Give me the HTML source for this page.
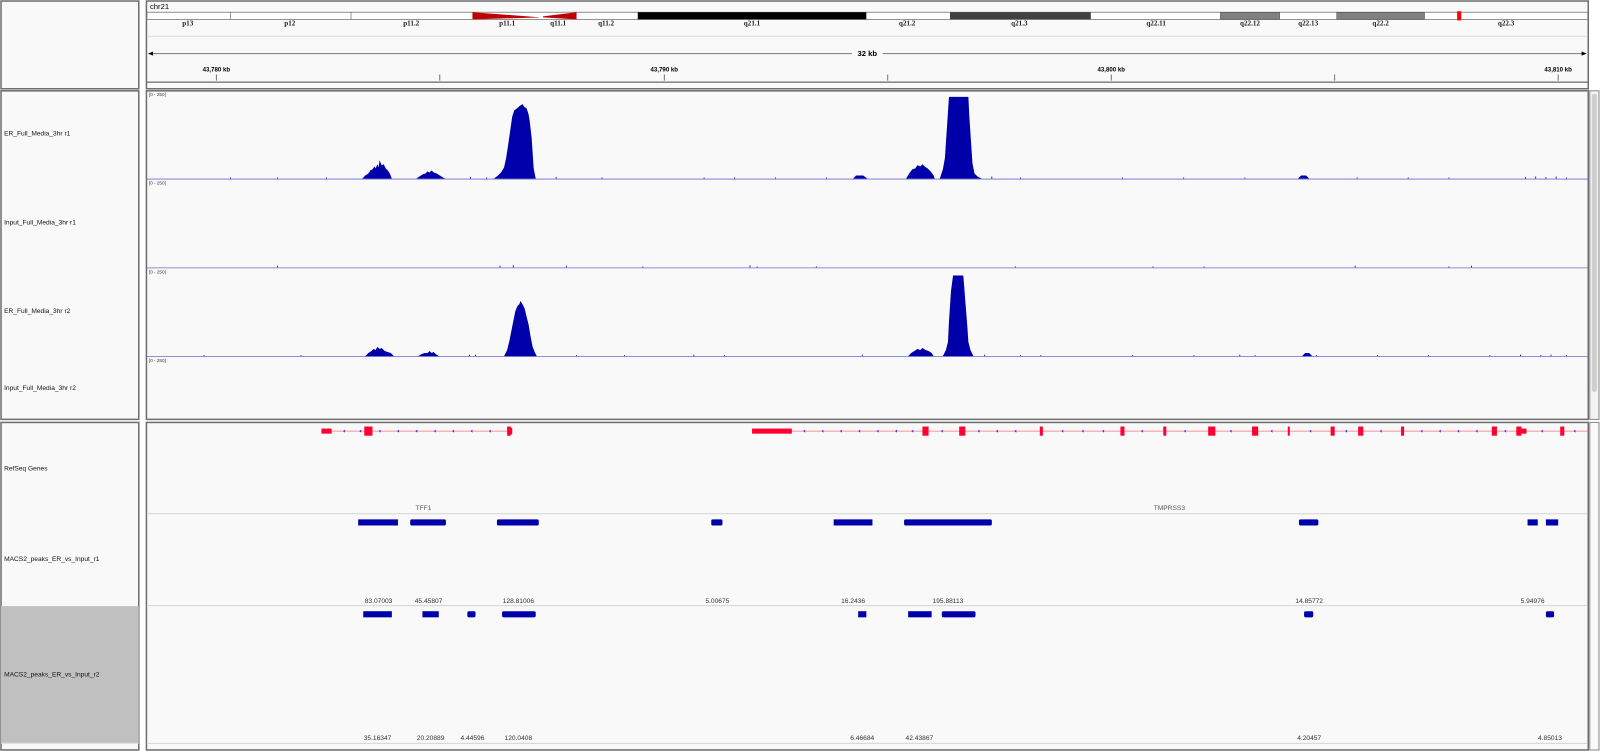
<!DOCTYPE html>
<html><head><meta charset="utf-8"><style>
html,body{margin:0;padding:0;background:#fff;width:1600px;height:751px;overflow:hidden}
svg{display:block}
text{font-family:"Liberation Sans",sans-serif}
.band text{font-family:"Liberation Serif",serif}
</style></head><body>
<svg width="1600" height="751" viewBox="0 0 1568 736" preserveAspectRatio="none" xmlns="http://www.w3.org/2000/svg">
<rect width="1568" height="736" fill="#fff"/>
<g fill="#f9f9f9" stroke="#6e6e6e" stroke-width="1.5">
<rect x="1" y="1" width="135" height="86"/>
<rect x="1" y="89" width="135" height="322"/>
<rect x="1" y="414" width="135" height="321"/>
<rect x="143.5" y="1" width="1413" height="86"/>
<rect x="143.5" y="89" width="1413" height="322"/>
<rect x="143.5" y="414" width="1413" height="321"/>
</g>
<rect x="1" y="594" width="135" height="134" fill="#c0c0c0"/>
<line x1="1" y1="728.5" x2="136" y2="728.5" stroke="#ddd"/>
<rect x="1558" y="89" width="9" height="322" fill="#f4f4f4" stroke="#888" stroke-width="1"/>
<rect x="1560" y="92" width="5" height="292" rx="2" fill="#cfcfcf"/>
<rect x="1558" y="414" width="9" height="321" fill="#fafafa" stroke="#888" stroke-width="1"/>
<text x="147" y="9" font-size="7.5">chr21</text>
<rect x="144" y="12" width="1412" height="7" fill="#fff" stroke="#777" stroke-width="0.8"/>
<g stroke="#555" stroke-width="0.6">
<line x1="226" y1="12" x2="226" y2="19"/><line x1="344" y1="12" x2="344" y2="19"/>
</g>
<polygon points="463,12 530,17 463,19" fill="#c00000"/>
<polygon points="532,16 565,12 565,19 532,17" fill="#c00000"/>
<rect x="625" y="12" width="224" height="7" fill="#000"/>
<rect x="931" y="12" width="138" height="7" fill="#404040"/>
<rect x="1196" y="12" width="58" height="7" fill="#808080" stroke="#444" stroke-width="0.5"/>
<rect x="1310" y="12" width="86" height="7" fill="#808080" stroke="#444" stroke-width="0.5"/>
<rect x="1428" y="11" width="4" height="9" fill="#ff0000"/>
<g class="band" font-size="7" text-anchor="middle" font-weight="bold" fill="#222">
<text x="184" y="25">p13</text>
<text x="284" y="25">p12</text>
<text x="403" y="25">p11.2</text>
<text x="497" y="25">p11.1</text>
<text x="547" y="25">q11.1</text>
<text x="594" y="25">q11.2</text>
<text x="737" y="25">q21.1</text>
<text x="889" y="25">q21.2</text>
<text x="999" y="25">q21.3</text>
<text x="1133" y="25">q22.11</text>
<text x="1225" y="25">q22.12</text>
<text x="1282" y="25">q22.13</text>
<text x="1353" y="25">q22.2</text>
<text x="1476" y="25">q22.3</text>
</g>
<line x1="144" y1="35.5" x2="1556" y2="35.5" stroke="#ddd"/>
<line x1="146" y1="52.5" x2="1553" y2="52.5" stroke="#888" stroke-width="1"/>
<polygon points="145,52.5 150,50.5 150,54.5" fill="#000"/>
<polygon points="1555,52.5 1550,50.5 1550,54.5" fill="#000"/>
<rect x="835" y="47" width="30" height="10" fill="#f9f9f9"/>
<text x="850" y="55" font-size="7.5" font-weight="bold" text-anchor="middle">32 kb</text>
<g font-size="6" font-weight="bold" text-anchor="middle">
<text x="212" y="70">43,780 kb</text><text x="651" y="70">43,790 kb</text>
<text x="1089" y="70">43,800 kb</text><text x="1527" y="70">43,810 kb</text>
</g>
<g stroke="#555" stroke-width="0.8">
<line x1="212" y1="73" x2="212" y2="79"/><line x1="431" y1="73" x2="431" y2="79"/>
<line x1="651" y1="73" x2="651" y2="79"/><line x1="870" y1="73" x2="870" y2="79"/>
<line x1="1089" y1="73" x2="1089" y2="79"/><line x1="1308" y1="73" x2="1308" y2="79"/>
<line x1="1527" y1="73" x2="1527" y2="79"/>
</g>
<line x1="144" y1="80.5" x2="1556" y2="80.5" stroke="#444" stroke-width="1"/>
<g font-size="6.5" fill="#111">
<text x="4" y="133">ER_Full_Media_3hr r1</text>
<text x="4" y="220">Input_Full_Media_3hr r1</text>
<text x="4" y="307">ER_Full_Media_3hr r2</text>
<text x="4" y="382">Input_Full_Media_3hr r2</text>
<text x="4" y="461">RefSeq Genes</text>
<text x="4" y="550">MACS2_peaks_ER_vs_Input_r1</text>
<text x="4" y="663">MACS2_peaks_ER_vs_Input_r2</text>
</g>
<g font-size="4.5" fill="#333">
<text x="146" y="94">[0 - 250]</text><text x="146" y="181">[0 - 250]</text>
<text x="146" y="268">[0 - 250]</text><text x="146" y="355">[0 - 250]</text>
</g>
<g stroke="#6a6ad0" stroke-width="0.8">
<line x1="144" y1="175.5" x2="1556" y2="175.5"/>
<line x1="144" y1="262.5" x2="1556" y2="262.5"/>
<line x1="144" y1="349.5" x2="1556" y2="349.5"/>
</g>
<g fill="#0000aa">
<polygon points="355,175 358,172 361,170 363,167 365,166 367,163 368,165 370,161 371,164 372,157 374,162 376,161 378,165 380,167 382,170 384,175"/>
<polygon points="408,175 411,173 414,171 417,170 419,168 421,169 423,167 425,169 428,170 431,172 436,175"/>
<polygon points="484,175 488,172 491,169 494,164 496,155 498,142 500,128 502,114 504,108 507,106 509,104 512,102 514,105 516,106 518,112 519,118 521,135 522,150 523,165 525,175"/>
<polygon points="888,175 891,170 894,166 897,165 899,162 902,163 904,161 906,163 909,165 912,168 915,172 916,175"/>
<polygon points="921,175 924,166 926,155 928,125 930,95 949,95 950,115 952,145 953,160 955,170 958,173 962,175"/>
<polygon points="1272,175 1275,172 1280,172 1283,175"/>
<polygon points="836,175 839,172 846,172 850,175"/>
</g>
<g stroke="#0000aa" stroke-width="0.8">
<path d="M226 175v-1M272 175v-1M320 175v-1M461 175v-1.5M477 175v-1M545 175v-1.5M590 175v-1M690 175v-1M720 175v-1M760 175v-1M810 175v-1M972 175v-2M1000 175v-1M1100 175v-1M1160 175v-1M1220 175v-1M1330 175v-1M1380 175v-1M1420 175v-1M1495 175v-1.5M1505 175v-2M1515 175v-1.5M1525 175v-2M1535 175v-1"/>
<path d="M272 262v-1.5M490 262v-1.5M503 262v-2M555 262v-1.5M630 262v-1M735 262v-2M742 262v-1M800 262v-1M995 262v-1M1130 262v-1M1180 262v-1M1328 262v-1.5M1420 262v-1M1442 262v-1.5"/>
</g>
<g fill="#0000aa">
<polygon points="358,349 361,346 364,344 366,342 368,343 370,340 372,342 374,341 377,344 380,345 383,346 386,349"/>
<polygon points="410,349 413,347 416,346 419,346 421,344 423,346 425,345 427,347 430,349"/>
<polygon points="494,349 497,343 499,335 501,325 503,315 505,305 507,300 509,298 510,295 512,298 514,302 516,310 518,318 520,330 522,340 524,345 526,349"/>
<polygon points="890,349 893,346 896,344 899,342 902,343 904,341 907,343 910,344 913,346 915,349"/>
<polygon points="924,349 927,343 929,335 930,315 932,285 934,270 944,270 945,282 946,295 948,320 949,335 951,343 954,349"/>
<polygon points="1276,349 1279,346 1283,346 1286,349"/>
</g>
<g stroke="#0000aa" stroke-width="0.8">
<path d="M200 349v-1M295 349v-1M460 349v-1.5M466 349v-1.5M565 349v-1M612 349v-1M680 349v-1.5M710 349v-1M845 349v-1.5M965 349v-1.5M1000 349v-1M1020 349v-1M1110 349v-1M1170 349v-1M1215 349v-1.5M1230 349v-1M1290 349v-1M1350 349v-1M1400 349v-1M1460 349v-1M1490 349v-1.5M1510 349v-1M1520 349v-1.5M1535 349v-1"/>
</g>
<g stroke="#ff6f80" stroke-width="0.8">
<line x1="315" y1="422.5" x2="502" y2="422.5"/>
<line x1="737" y1="422.5" x2="1556" y2="422.5"/>
</g>
<g fill="#ff0033">
<rect x="315" y="420" width="10" height="5"/>
<rect x="357" y="418" width="8" height="9"/>
<polygon points="497,418 500,418 502,420 502,425 500,427 497,427"/>
<rect x="737" y="420" width="39" height="5"/>
<rect x="904" y="418" width="6" height="9"/><rect x="940" y="418" width="6" height="9"/>
<rect x="1019" y="418" width="3" height="9"/><rect x="1098" y="418" width="4" height="9"/>
<rect x="1140" y="418" width="3" height="9"/><rect x="1184" y="418" width="7" height="9"/>
<rect x="1227" y="418" width="6" height="9"/><rect x="1262" y="418" width="2" height="9"/>
<rect x="1304" y="418" width="4" height="9"/><rect x="1331" y="418" width="5" height="9"/>
<rect x="1373" y="418" width="3" height="9"/><rect x="1462" y="418" width="5" height="9"/>
<rect x="1486" y="418" width="5" height="9"/><rect x="1491" y="420" width="5" height="5"/>
<rect x="1529" y="418" width="4" height="9"/>
</g>
<g fill="#3333ff">
<path d="M336 422.5l2-1.5v3zM352 422.5l2-1.5v3zM371 422.5l2-1.5v3zM389 422.5l2-1.5v3zM407 422.5l2-1.5v3zM425 422.5l2-1.5v3zM443 422.5l2-1.5v3zM461 422.5l2-1.5v3zM479 422.5l2-1.5v3z"/>
<path d="M787 422.5l2-1.5v3zM805 422.5l2-1.5v3zM823 422.5l2-1.5v3zM841 422.5l2-1.5v3zM859 422.5l2-1.5v3zM877 422.5l2-1.5v3zM893 422.5l2-1.5v3zM922 422.5l2-1.5v3zM958 422.5l2-1.5v3zM976 422.5l2-1.5v3zM994 422.5l2-1.5v3zM1040 422.5l2-1.5v3zM1060 422.5l2-1.5v3zM1080 422.5l2-1.5v3zM1118 422.5l2-1.5v3zM1160 422.5l2-1.5v3zM1205 422.5l2-1.5v3zM1245 422.5l2-1.5v3zM1283 422.5l2-1.5v3zM1318 422.5l2-1.5v3zM1352 422.5l2-1.5v3zM1392 422.5l2-1.5v3zM1410 422.5l2-1.5v3zM1428 422.5l2-1.5v3zM1446 422.5l2-1.5v3zM1474 422.5l2-1.5v3zM1510 422.5l2-1.5v3zM1542 422.5l2-1.5v3z"/>
</g>
<g font-size="6.5" fill="#555" text-anchor="middle">
<text x="415" y="500">TFF1</text><text x="1146" y="500">TMPRSS3</text>
</g>
<line x1="144" y1="503.5" x2="1556" y2="503.5" stroke="#d4d4d4"/>
<line x1="144" y1="593.5" x2="1556" y2="593.5" stroke="#d4d4d4"/>
<line x1="144" y1="728.5" x2="1556" y2="728.5" stroke="#d4d4d4"/>
<g fill="#0000aa">
<rect x="351" y="509" width="39" height="6"/><rect x="402" y="509" width="35" height="6" rx="1.5"/>
<rect x="487" y="509" width="41" height="6" rx="1.5"/><rect x="697" y="509" width="11" height="6" rx="1.5"/>
<rect x="817" y="509" width="38" height="6"/><rect x="886" y="509" width="86" height="6" rx="1.5"/>
<rect x="1273" y="509" width="19" height="6" rx="1.5"/><rect x="1497" y="509" width="10" height="6"/>
<rect x="1515" y="509" width="12" height="6"/>
</g>
<g font-size="6.5" fill="#333" text-anchor="middle">
<text x="371" y="591">83.07003</text><text x="420" y="591">45.45807</text><text x="508" y="591">128.81006</text>
<text x="703" y="591">5.00675</text><text x="836" y="591">16.2436</text><text x="929" y="591">195.88113</text>
<text x="1283" y="591">14.85772</text><text x="1502" y="591">5.94976</text>
</g>
<g fill="#0000aa">
<rect x="356" y="599" width="28" height="6"/><rect x="414" y="599" width="16" height="6"/>
<rect x="458" y="599" width="8" height="6" rx="1.5"/><rect x="492" y="599" width="33" height="6" rx="1.5"/>
<rect x="841" y="599" width="8" height="6"/><rect x="890" y="599" width="23" height="6"/>
<rect x="923" y="599" width="33" height="6" rx="1.5"/><rect x="1278" y="599" width="9" height="6" rx="1.5"/>
<rect x="1515" y="599" width="8" height="6" rx="1.5"/>
</g>
<g font-size="6.5" fill="#333" text-anchor="middle">
<text x="370" y="725">35.16347</text><text x="422" y="725">20.20889</text><text x="463" y="725">4.44596</text>
<text x="508" y="725">120.0408</text><text x="845" y="725">6.46684</text><text x="901" y="725">42.43867</text>
<text x="1283" y="725">4.20457</text><text x="1519" y="725">4.85013</text>
</g>
</svg>
</body></html>
